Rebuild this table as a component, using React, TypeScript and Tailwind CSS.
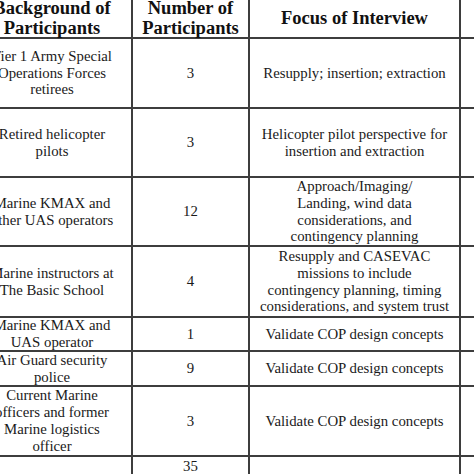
import React from "react";

const rows: { bg: string[]; n: string; focus: string[]; h: string }[] = [
  { bg: ["Tier 1 Army Special", "Operations Forces", "retirees"], n: "3", focus: ["Resupply; insertion; extraction"], h: "h-[68px]" },
  { bg: ["Retired helicopter", "pilots"], n: "3", focus: ["Helicopter pilot perspective for", "insertion and extraction"], h: "h-[67px]" },
  { bg: ["Marine KMAX and", "other UAS operators"], n: "12", focus: ["Approach/Imaging/", "Landing, wind data", "considerations, and", "contingency planning"], h: "h-[67px]" },
  { bg: ["Marine instructors at", "The Basic School"], n: "4", focus: ["Resupply and CASEVAC", "missions to include", "contingency planning, timing", "considerations, and system trust"], h: "h-[69px]" },
  { bg: ["Marine KMAX and", "UAS operator"], n: "1", focus: ["Validate COP design concepts"], h: "h-[32px]" },
  { bg: ["Air Guard security", "police"], n: "9", focus: ["Validate COP design concepts"], h: "h-[33px]" },
  { bg: ["Current Marine", "officers and former", "Marine logistics", "officer"], n: "3", focus: ["Validate COP design concepts"], h: "h-[68px]" },
];

function Lines({ lines }: { lines: string[] }) {
  return (
    <div className="flex flex-col items-center">
      {lines.map((l, i) => (
        <span key={i} className="whitespace-nowrap">{l}</span>
      ))}
    </div>
  );
}

export default function App() {
  const cell = "bg-white flex items-center justify-center text-center overflow-visible";
  const head = `${cell} h-[37px] font-bold text-[18.5px] leading-[19.5px] text-[#111]`;
  return (
    <div className="w-[474px] h-[474px] overflow-hidden bg-white" style={{ fontFamily: '"Liberation Serif", "Times New Roman", serif' }}>
      <div className="ml-[-27px] w-[540px] bg-[#3d3d3d] grid grid-cols-[158px_115px_209px_1fr] gap-[2px] text-[#1a1a1a] text-[14.8px] leading-[16.8px]">
        <div className={head}>
          <Lines lines={["Background of", "Participants"]} />
        </div>
        <div className={head}>
          <Lines lines={["Number of", "Participants"]} />
        </div>
        <div className={head}>
          <Lines lines={["Focus of Interview"]} />
        </div>
        <div className={`${cell} h-[37px]`} />
        {rows.map((r, i) => (
          <React.Fragment key={i}>
            <div className={`${cell} ${r.h}`}><Lines lines={r.bg} /></div>
            <div className={`${cell} ${r.h}`}>{r.n}</div>
            <div className={`${cell} ${r.h}`}><Lines lines={r.focus} /></div>
            <div className={`${cell} ${r.h}`} />
          </React.Fragment>
        ))}
        <div className={`${cell} h-[30px]`} />
        <div className="bg-white h-[30px] flex justify-center items-start pt-[1px]">35</div>
        <div className={`${cell} h-[30px]`} />
        <div className={`${cell} h-[30px]`} />
      </div>
    </div>
  );
}
